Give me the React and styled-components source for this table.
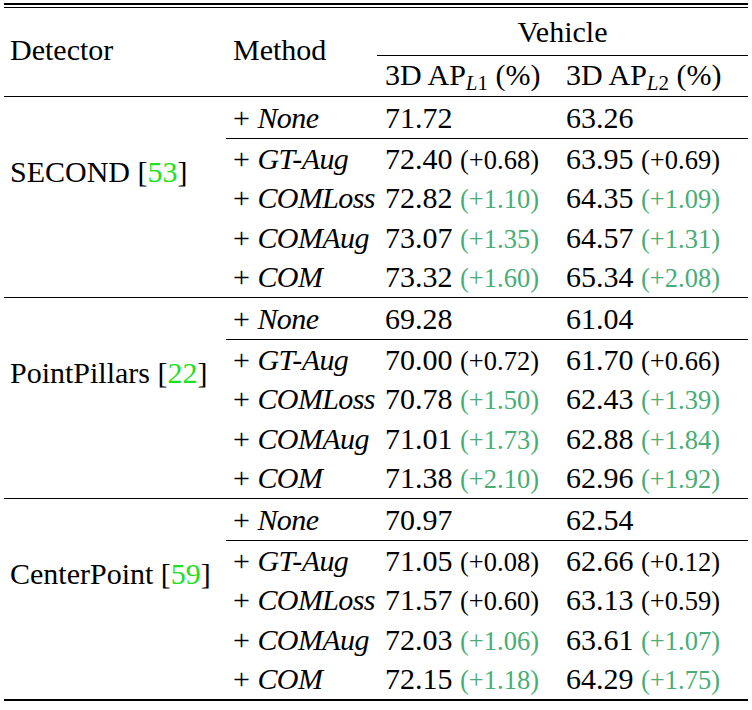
import React from 'react';
import styled, {createGlobalStyle} from 'styled-components';

const GlobalStyle = createGlobalStyle`
  body {
    margin: 0;
    background: #fff;
  }
`;

const Table = styled.div`
  width: 744px;
  margin: 3px 0 0 4px;
  font-family: "Liberation Serif", "Times New Roman", serif;
  font-size: 30px;
  color: #000;
`;

const TopRule = styled.div`
  height: 2px;
  border-top: 2px solid #000;
  border-bottom: 1px solid #000;
`;

const BottomRule = styled.div`
  border-top: 2px solid #000;
`;

const Header = styled.div`
  display: flex;
  height: 88px;
  border-bottom: 1px solid #000;
`;

const HeadLabel = styled.div`
  width: ${p => p.$w}px;
  padding-left: ${p => p.$pad}px;
  padding-bottom: 4px;
  box-sizing: border-box;
  display: flex;
  align-items: center;
`;

const Group = styled.div`
  flex: 1;
  display: flex;
  flex-direction: column;
`;

const GroupTitle = styled.div`
  height: 47px;
  border-bottom: 1px solid #000;
  display: flex;
  align-items: center;
  justify-content: center;
`;

const SubHeads = styled.div`
  display: grid;
  grid-template-columns: 182px 189px;
  height: 40px;
  padding-bottom: 3px;
  box-sizing: border-box;
  align-items: center;
`;

const SubHead = styled.div`
  padding-left: ${p => p.$pad}px;
  white-space: nowrap;
`;

const Sub = styled.sub`
  font-size: 0.7em;
  vertical-align: -0.25em;
  line-height: 0;
  i {
    font-style: italic;
  }
`;

const Section = styled.div`
  display: flex;
  & + & {
    border-top: 1px solid #000;
  }
  &:last-of-type {
    padding-bottom: 6px;
  }
`;

const DetectorCell = styled.div`
  width: 222px;
  box-sizing: border-box;
  padding: 55px 0 0 6px;
  line-height: 40px;
  white-space: nowrap;
`;

const Cite = styled.span`
  color: #1ee01e;
`;

const Rows = styled.div`
  flex: 1;
  display: flex;
  flex-direction: column;
`;

const Row = styled.div`
  display: grid;
  grid-template-columns: 151px 182px 189px;
  align-items: center;
  height: ${p => (p.$base ? '41px' : '39.5px')};
  border-bottom: ${p => (p.$base ? '1px solid #000' : 'none')};
`;

const Cell = styled.div`
  padding-left: ${p => p.$pad}px;
  white-space: nowrap;
`;

const MethodName = styled.i`
  font-style: italic;
  letter-spacing: -0.6px;
`;

const Delta = styled.span`
  font-size: 26.5px;
  color: ${p => (p.$good ? '#48ad74' : '#000')};
`;

const sections = [
  {
    name: 'SECOND',
    cite: '53',
    rows: [
      ['None', '71.72', null, '63.26', null],
      ['GT-Aug', '72.40', '+0.68', '63.95', '+0.69'],
      ['COMLoss', '72.82', '+1.10', '64.35', '+1.09'],
      ['COMAug', '73.07', '+1.35', '64.57', '+1.31'],
      ['COM', '73.32', '+1.60', '65.34', '+2.08'],
    ],
  },
  {
    name: 'PointPillars',
    cite: '22',
    rows: [
      ['None', '69.28', null, '61.04', null],
      ['GT-Aug', '70.00', '+0.72', '61.70', '+0.66'],
      ['COMLoss', '70.78', '+1.50', '62.43', '+1.39'],
      ['COMAug', '71.01', '+1.73', '62.88', '+1.84'],
      ['COM', '71.38', '+2.10', '62.96', '+1.92'],
    ],
  },
  {
    name: 'CenterPoint',
    cite: '59',
    rows: [
      ['None', '70.97', null, '62.54', null],
      ['GT-Aug', '71.05', '+0.08', '62.66', '+0.12'],
      ['COMLoss', '71.57', '+0.60', '63.13', '+0.59'],
      ['COMAug', '72.03', '+1.06', '63.61', '+1.07'],
      ['COM', '72.15', '+1.18', '64.29', '+1.75'],
    ],
  },
];

function Value({value, delta}) {
  return (
    <>
      {value}
      {delta && <> <Delta $good={parseFloat(delta) >= 1}>({delta})</Delta></>}
    </>
  );
}

export default function App() {
  return (
    <Table>
      <GlobalStyle />
      <TopRule />
      <Header>
        <HeadLabel $w={222} $pad={6}>Detector</HeadLabel>
        <HeadLabel $w={151} $pad={7}>Method</HeadLabel>
        <Group>
          <GroupTitle>Vehicle</GroupTitle>
          <SubHeads>
            <SubHead $pad={8}>3D AP<Sub><i>L</i>1</Sub> (%)</SubHead>
            <SubHead $pad={7}>3D AP<Sub><i>L</i>2</Sub> (%)</SubHead>
          </SubHeads>
        </Group>
      </Header>
      {sections.map(section => (
        <Section key={section.name}>
          <DetectorCell>
            {section.name} [<Cite>{section.cite}</Cite>]
          </DetectorCell>
          <Rows>
            {section.rows.map((row, i) => (
              <Row key={row[0]} $base={i === 0}>
                <Cell $pad={7}>+ <MethodName>{row[0]}</MethodName></Cell>
                <Cell $pad={8}><Value value={row[1]} delta={row[2]} /></Cell>
                <Cell $pad={7}><Value value={row[3]} delta={row[4]} /></Cell>
              </Row>
            ))}
          </Rows>
        </Section>
      ))}
      <BottomRule />
    </Table>
  );
}
